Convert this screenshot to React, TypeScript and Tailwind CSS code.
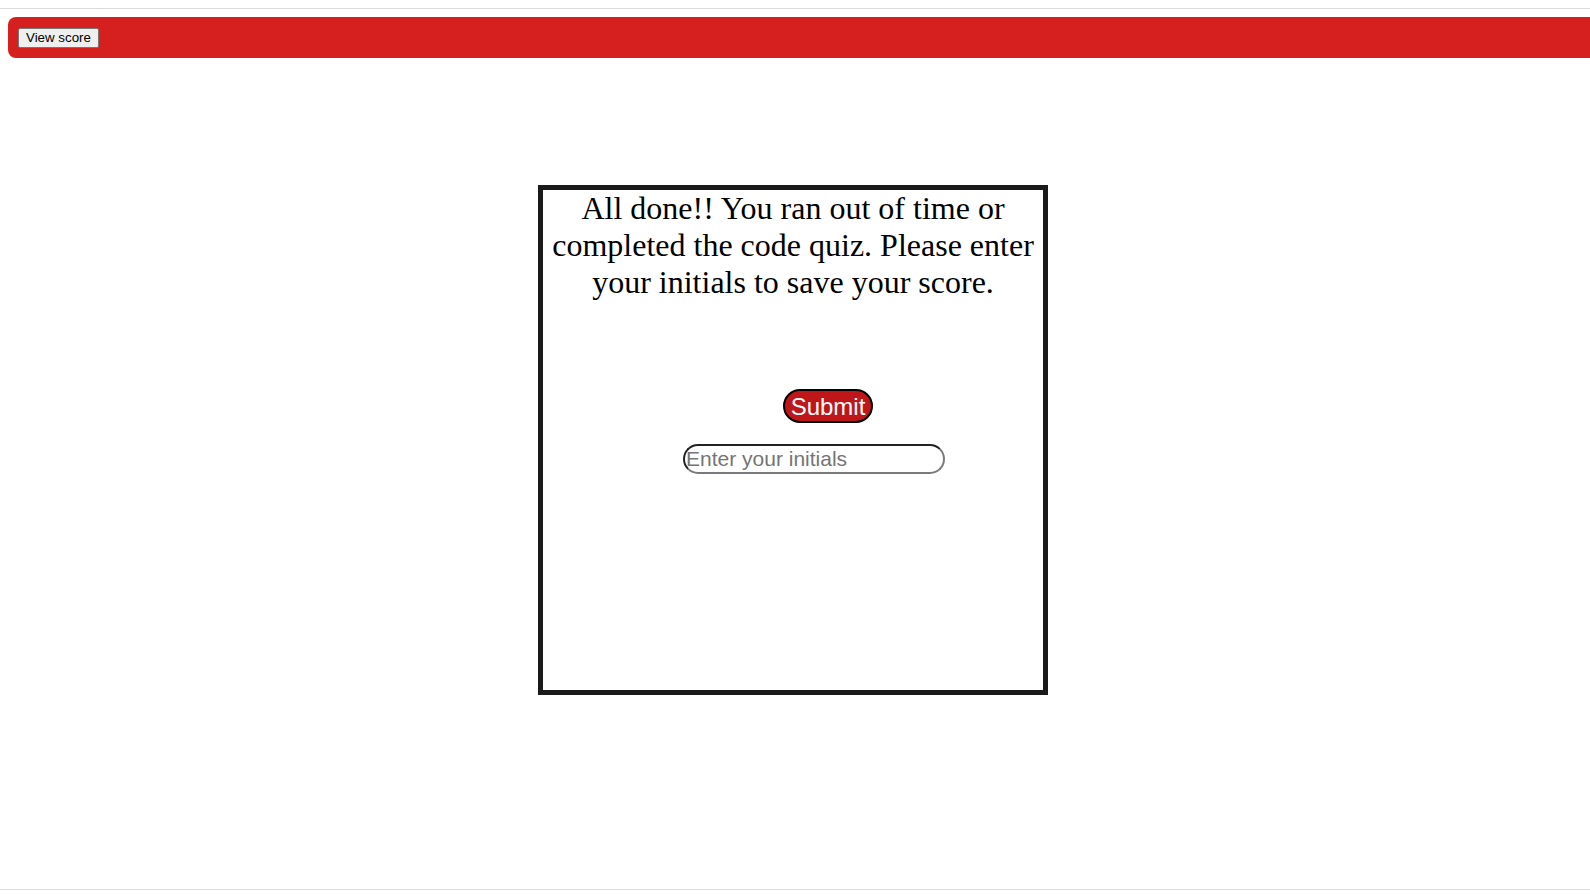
import React from 'react';

export default function App() {
  return (
    <div className="w-full bg-white font-['Liberation_Sans',Arial,sans-serif]">
      <div className="h-2" />
      <div className="h-px bg-[#dcdcdc]" />
      <header className="ml-2 mt-2 flex h-[41px] items-center rounded-l-lg bg-[#d61f1f] px-[10px]">
        <button
          type="button"
          className="h-[20px] rounded-[2px] border border-[#767676] bg-[#efefef] px-[7px] text-[13.33px] leading-[16px] text-black"
        >
          View score
        </button>
      </header>

      <main className="ml-[538px] mt-[127px] flex h-[510px] w-[510px] flex-col border-[5px] border-[#1a1a1a]">
        <h1 className="m-0 text-center font-['Liberation_Serif','Times_New_Roman',serif] text-[32px] font-normal leading-[36.8px] text-black">
          All done!! You ran out of time or completed the code quiz. Please enter your initials to save your score.
        </h1>
        <button
          type="button"
          className="ml-[240px] mt-[89px] h-[34px] w-[90px] rounded-full border-2 border-black bg-[#bf161a] text-[24px] leading-[27px] text-white"
        >
          Submit
        </button>
        <input
          type="text"
          placeholder="Enter your initials"
          className="ml-[140px] mt-[21px] h-[30px] w-[262px] rounded-full border-2 border-b-[#7a7a7a] border-l-[#222] border-r-[#7a7a7a] border-t-[#222] px-px text-[21px] leading-[24px] text-black outline-none placeholder:text-[#757575]"
        />
      </main>

      <div className="h-[194px]" />
      <div className="h-px bg-[#dcdcdc]" />
    </div>
  );
}
